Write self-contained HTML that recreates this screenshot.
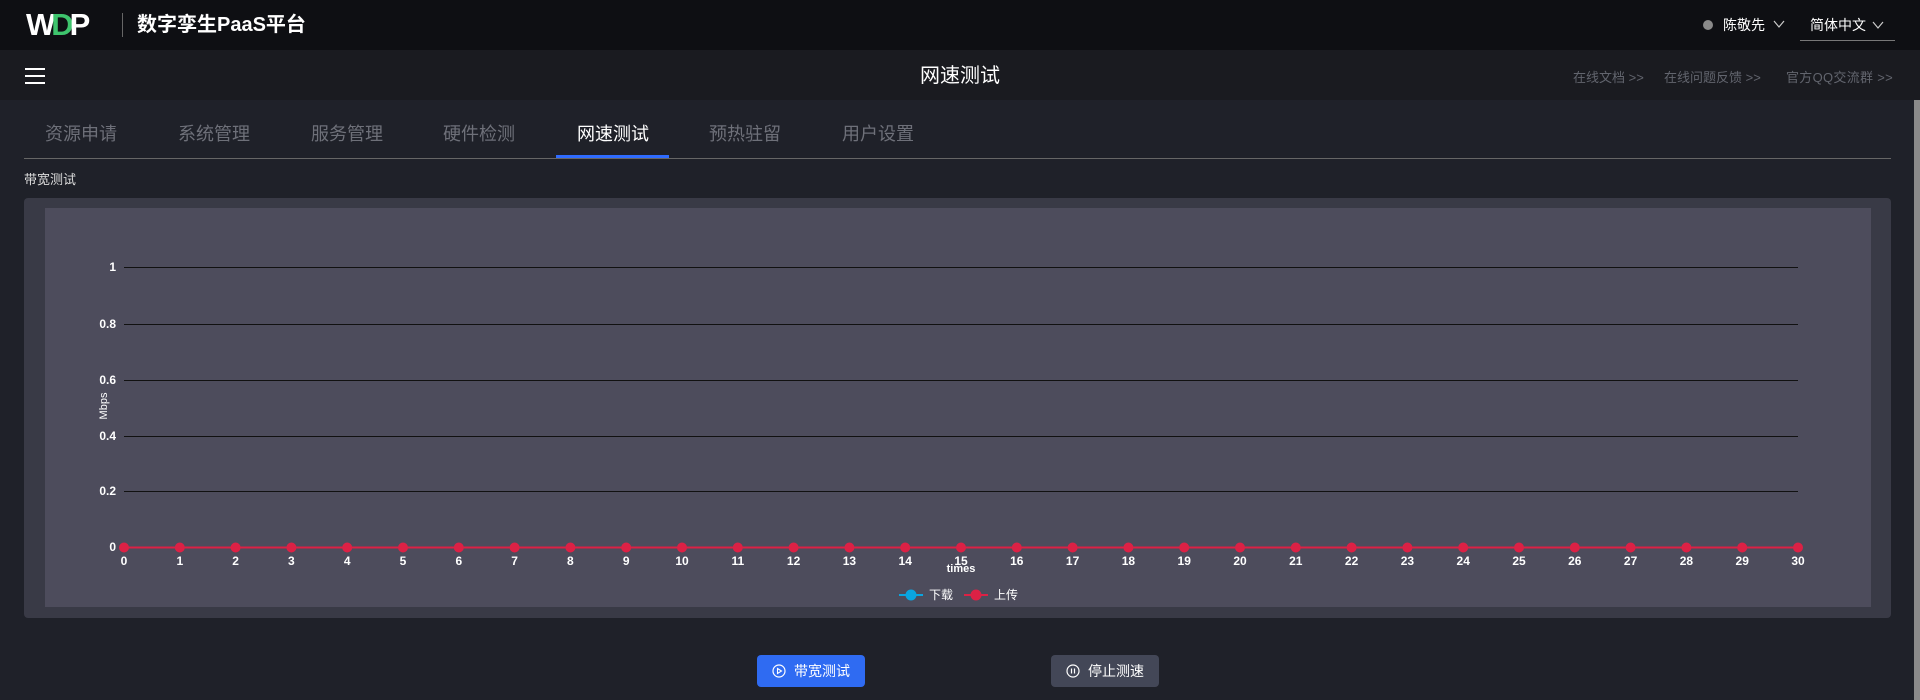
<!DOCTYPE html>
<html><head><meta charset="utf-8"><style>
*{margin:0;padding:0;box-sizing:border-box}
body{width:1920px;height:700px;overflow:hidden;background:#1f2129;font-family:"Liberation Sans","Noto Sans CJK SC",sans-serif;position:relative;color:#fff}
.abs{position:absolute;white-space:nowrap}
.top{position:absolute;left:0;top:0;width:1920px;height:50px;background:#0e0f13}
.bar2{position:absolute;left:0;top:50px;width:1920px;height:50px;background:#1a1b20}
.tab{position:absolute;top:121px;font-size:18px;color:#6e7079;line-height:26px}
.link{font-size:13px;color:#62656e;top:67px}
.btn{position:absolute;top:655px;width:108px;height:32px;border-radius:4px;font-size:14px;color:#fff;display:flex;align-items:center;justify-content:center;gap:8px}
</style></head><body>
<div class="top"></div>
<div class="bar2"></div>
<!-- logo -->
<div class="abs" style="left:26px;top:9px;font-size:31px;font-weight:bold;letter-spacing:-4px;line-height:32px;color:#fff;font-family:'Liberation Sans',sans-serif">W<span style="color:#3ec46d">D</span>P</div>
<div class="abs" style="left:122px;top:13px;width:1px;height:24px;background:#666"></div>
<div class="abs" style="left:137px;top:11px;font-size:20px;line-height:28px;font-weight:bold">数字孪生PaaS平台</div>
<!-- user -->
<div class="abs" style="left:1703px;top:20px;width:10px;height:10px;border-radius:50%;background:#8a8a8a"></div>
<div class="abs" style="left:1723px;top:15px;font-size:14px;line-height:20px">陈敬先</div>
<svg class="abs" style="left:1773px;top:19px" width="12" height="10"><path d="M1 2 L6 8 L11 2" stroke="#ccc" fill="none" stroke-width="1.2"/></svg>
<div class="abs" style="left:1810px;top:15px;font-size:14px;line-height:20px">简体中文</div>
<svg class="abs" style="left:1872px;top:20px" width="12" height="10"><path d="M1 2 L6 8 L11 2" stroke="#ccc" fill="none" stroke-width="1.2"/></svg>
<div class="abs" style="left:1800px;top:40px;width:95px;height:1px;background:#777"></div>
<!-- bar2 -->
<div class="abs" style="left:25px;top:68px;width:20px;height:2px;background:#fff"></div>
<div class="abs" style="left:25px;top:75px;width:20px;height:2px;background:#fff"></div>
<div class="abs" style="left:25px;top:82px;width:20px;height:2px;background:#fff"></div>
<div class="abs" style="left:920px;top:62px;font-size:20px;line-height:28px;width:80px;text-align:center">网速测试</div>
<div class="abs link" style="left:1573px">在线文档 &gt;&gt;</div>
<div class="abs link" style="left:1664px">在线问题反馈 &gt;&gt;</div>
<div class="abs link" style="left:1786px;letter-spacing:0.3px">官方QQ交流群 &gt;&gt;</div>
<!-- tabs -->
<div class="tab" style="left:45px">资源申请</div>
<div class="tab" style="left:178px">系统管理</div>
<div class="tab" style="left:311px">服务管理</div>
<div class="tab" style="left:443px">硬件检测</div>
<div class="tab" style="left:577px;color:#fff">网速测试</div>
<div class="tab" style="left:709px">预热驻留</div>
<div class="tab" style="left:842px">用户设置</div>
<div class="abs" style="left:24px;top:158px;width:1867px;height:1px;background:#666"></div>
<div class="abs" style="left:556px;top:155px;width:113px;height:3px;background:#2f6bff"></div>
<div class="abs" style="left:24px;top:171px;font-size:13px;line-height:18px;color:#ddd">带宽测试</div>
<!-- scrollbar -->
<div class="abs" style="left:1914px;top:100px;width:6px;height:600px;background:#8a8a8a"></div>
<!-- chart panel -->
<div class="abs" style="left:24px;top:198px;width:1867px;height:420px;background:#393a46;border-radius:4px"></div>
<svg class="abs" style="left:0;top:0" width="1920" height="700" font-family="Liberation Sans, Noto Sans CJK SC, sans-serif">
<rect x="45" y="208" width="1826" height="399" fill="#4d4c5c"/>
<g stroke="#111" stroke-width="1">
<line x1="124" x2="1798" y1="267.5" y2="267.5"/>
<line x1="124" x2="1798" y1="324.5" y2="324.5"/>
<line x1="124" x2="1798" y1="380.5" y2="380.5"/>
<line x1="124" x2="1798" y1="436.5" y2="436.5"/>
<line x1="124" x2="1798" y1="491.5" y2="491.5"/>
</g>
<g fill="#fff" font-size="12" font-weight="bold" text-anchor="end">
<text x="116" y="271">1</text><text x="116" y="328">0.8</text><text x="116" y="384">0.6</text><text x="116" y="440">0.4</text><text x="116" y="495">0.2</text><text x="116" y="551">0</text>
</g>
<text x="107" y="406" fill="#fff" font-size="11" transform="rotate(-90 107 406)" text-anchor="middle">Mbps</text>
<line x1="124" x2="1798" y1="547.5" y2="547.5" stroke="#dc2145" stroke-width="2"/>
<g id="pts" fill="#dc2145"></g>
<g id="lbl" fill="#fff" font-size="12" font-weight="bold" text-anchor="middle"></g>
<text x="961" y="572" fill="#fff" font-size="11" font-weight="bold" text-anchor="middle">times</text>
<line x1="899" x2="923" y1="595" y2="595" stroke="#0aa5e0" stroke-width="2"/><circle cx="911" cy="595" r="5.5" fill="#0aa5e0"/>
<text x="929" y="599" fill="#fff" font-size="12">下载</text>
<line x1="964" x2="988" y1="595" y2="595" stroke="#dc2145" stroke-width="2"/><circle cx="976" cy="595" r="5.5" fill="#dc2145"/>
<text x="994" y="599" fill="#fff" font-size="12">上传</text>
</svg>
<div class="btn" style="left:757px;background:#2f6bf2"><svg width="14" height="14"><circle cx="7" cy="7" r="6" stroke="#fff" fill="none" stroke-width="1.2"/><path d="M5.5 4.5 L9.5 7 L5.5 9.5Z" fill="none" stroke="#fff" stroke-width="1.1"/></svg>带宽测试</div>
<div class="btn" style="left:1051px;background:#434757"><svg width="14" height="14"><circle cx="7" cy="7" r="6" stroke="#fff" fill="none" stroke-width="1.2"/><path d="M5.5 4.5V9.5M8.5 4.5V9.5" stroke="#fff" stroke-width="1.2"/></svg>停止测速</div>
<script>
var p=document.getElementById('pts'),l=document.getElementById('lbl'),ns='http://www.w3.org/2000/svg';
for(var i=0;i<=30;i++){var x=124+i*(1798-124)/30;var c=document.createElementNS(ns,'circle');c.setAttribute('cx',x);c.setAttribute('cy',547.5);c.setAttribute('r',5);p.appendChild(c);
var t=document.createElementNS(ns,'text');t.setAttribute('x',x);t.setAttribute('y',565);t.textContent=i;l.appendChild(t);}
</script>
</body></html>
